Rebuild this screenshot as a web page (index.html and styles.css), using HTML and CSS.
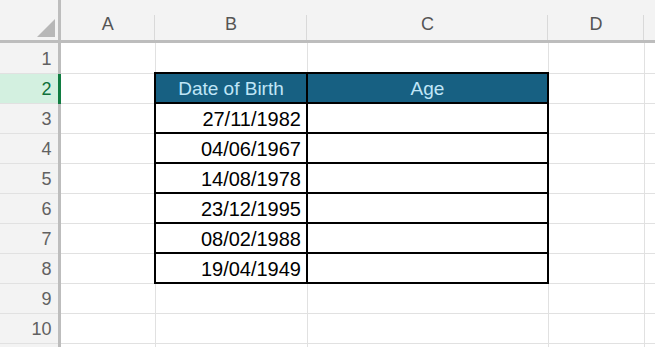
FILE: index.html
```html
<!DOCTYPE html>
<html>
<head>
<meta charset="utf-8">
<link rel="stylesheet" href="styles.css">
</head>
<body>
<table class="sheet">
  <colgroup>
    <col class="c-rh"><col class="c-a"><col class="c-b"><col class="c-c"><col class="c-d"><col class="c-e">
  </colgroup>
  <thead>
    <tr>
      <th class="corner"><svg class="tri" width="18" height="18" viewBox="0 0 18 18"><polygon points="18,0 18,18 0,18" fill="#b7b7b7"/></svg></th>
      <th class="colh">A</th>
      <th class="colh">B</th>
      <th class="colh">C</th>
      <th class="colh">D</th>
      <th class="colh last"></th>
    </tr>
  </thead>
  <tbody>
    <tr><th class="rowh">1</th><td></td><td></td><td></td><td></td><td></td></tr>
    <tr><th class="rowh sel">2</th><td></td><td class="tb hd">Date of Birth</td><td class="tb hd">Age</td><td></td><td></td></tr>
    <tr><th class="rowh">3</th><td></td><td class="tb num">27/11/1982</td><td class="tb"></td><td></td><td></td></tr>
    <tr><th class="rowh">4</th><td></td><td class="tb num">04/06/1967</td><td class="tb"></td><td></td><td></td></tr>
    <tr><th class="rowh">5</th><td></td><td class="tb num">14/08/1978</td><td class="tb"></td><td></td><td></td></tr>
    <tr><th class="rowh">6</th><td></td><td class="tb num">23/12/1995</td><td class="tb"></td><td></td><td></td></tr>
    <tr><th class="rowh">7</th><td></td><td class="tb num">08/02/1988</td><td class="tb"></td><td></td><td></td></tr>
    <tr><th class="rowh">8</th><td></td><td class="tb num">19/04/1949</td><td class="tb"></td><td></td><td></td></tr>
    <tr><th class="rowh">9</th><td></td><td></td><td></td><td></td><td></td></tr>
    <tr><th class="rowh">10</th><td></td><td></td><td></td><td></td><td></td></tr>
    <tr><th class="rowh"></th><td></td><td></td><td></td><td></td><td></td></tr>
  </tbody>
</table>
</body>
</html>
```
FILE: styles.css
```css
html, body {
  margin: 0;
  padding: 0;
  background: #ffffff;
  overflow: hidden;
}
body {
  width: 655px;
  height: 347px;
  font-family: "Liberation Sans", Arial, sans-serif;
}
.sheet {
  border-collapse: collapse;
  table-layout: fixed;
  width: 700px;
  font-size: 19px;
  line-height: 22px;
}
.c-rh { width: 59px; }
.c-a { width: 96px; }
.c-b { width: 152px; }
.c-c { width: 241px; }
.c-d { width: 96px; }
.c-e { width: 56px; }

.sheet th, .sheet td {
  padding: 0;
  height: 26px;
  border: 1px solid #e1e1e1;
  border-top: none;
  border-left: none;
  white-space: nowrap;
  overflow: hidden;
}
.sheet thead th {
  height: 35px;
  background: #f3f3f3 linear-gradient(#d9d9d9, #d9d9d9) no-repeat right bottom / 1px 25px;
  border-right: none;
  border-bottom: 3px solid #bdbdbd;
  font-weight: normal;
  color: #555555;
  vertical-align: bottom;
  padding-bottom: 5px;
  font-size: 18px;
}
.sheet thead th.corner {
  background: #f3f3f3;
  border-right: 3px solid #bdbdbd;
  text-align: right;
  padding: 0 3px 3px 0;
  line-height: 0;
}
.tri { display: inline-block; }
.rowh {
  background: #f3f3f3;
  border-right: 3px solid #bdbdbd !important;
  text-align: right;
  padding-right: 6px !important;
  font-weight: normal;
  color: #616161;
  font-size: 18px;
  vertical-align: bottom;
  padding-bottom: 3px !important;
}
.rowh.sel {
  background: #d3f0e0;
  color: #0f703b;
  border-right-color: #107c41 !important;
}
.sheet td {
  vertical-align: bottom;
  padding-bottom: 3px;
}
.sheet td.tb {
  border: 2px solid #000000;
  height: 25px;
  padding-bottom: 2px;
}
.sheet td.hd {
  background: #176082;
  color: #c0e6f7;
  text-align: center;
}
.sheet td.num {
  text-align: right;
  padding-right: 5px;
  color: #000000;
  font-size: 20px;
}
```
